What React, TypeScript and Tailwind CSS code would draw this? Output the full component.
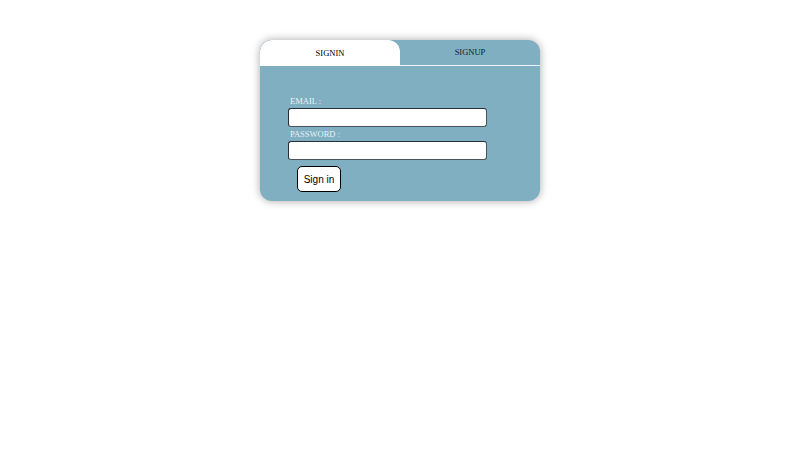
import React from "react";

export default function App() {
  return (
    <div className="w-[800px] h-[450px] bg-white pt-[40px]">
      <div className="mx-auto w-[280px] rounded-[12px] bg-[#7fafc1] shadow-[0_0_8px_rgba(0,0,0,0.35)] overflow-hidden">
        <div className="flex h-[26px] font-['Liberation_Serif',serif] text-[8.5px] leading-none">
          <div className="w-[140px] bg-white rounded-t-[12px] flex items-center justify-center text-black">
            SIGNIN
          </div>
          <div className="w-[140px] border-b border-[#eef5f8] flex items-center justify-center text-[#13232a]">
            SIGNUP
          </div>
        </div>
        <div className="pt-[29px] pl-[28px] pb-[9px]">
          <div className="h-[10px] pl-[2px] mb-[3px] text-[8.5px] leading-[12px] text-[#e9f2f5] font-['Liberation_Serif',serif]">
            EMAIL :
          </div>
          <input className="block w-[199px] h-[19px] bg-white rounded-[3px] border-[1.5px] border-t-[#263034] border-l-[#263034] border-r-[#4a5458] border-b-[#4a5458] outline-none" />
          <div className="h-[10px] pl-[2px] mt-[1px] mb-[3px] text-[8.5px] leading-[12px] text-[#e9f2f5] font-['Liberation_Serif',serif]">
            PASSWORD :
          </div>
          <input type="password" className="block w-[199px] h-[19px] bg-white rounded-[3px] border-[1.5px] border-t-[#263034] border-l-[#263034] border-r-[#4a5458] border-b-[#4a5458] outline-none" />
          <button className="mt-[6px] ml-[9px] w-[44px] h-[26px] pt-[1px] bg-white rounded-[5px] border-[1.5px] border-black text-[10px] leading-none text-black font-['Liberation_Sans',Arial,sans-serif]">
            Sign in
          </button>
        </div>
      </div>
    </div>
  );
}
